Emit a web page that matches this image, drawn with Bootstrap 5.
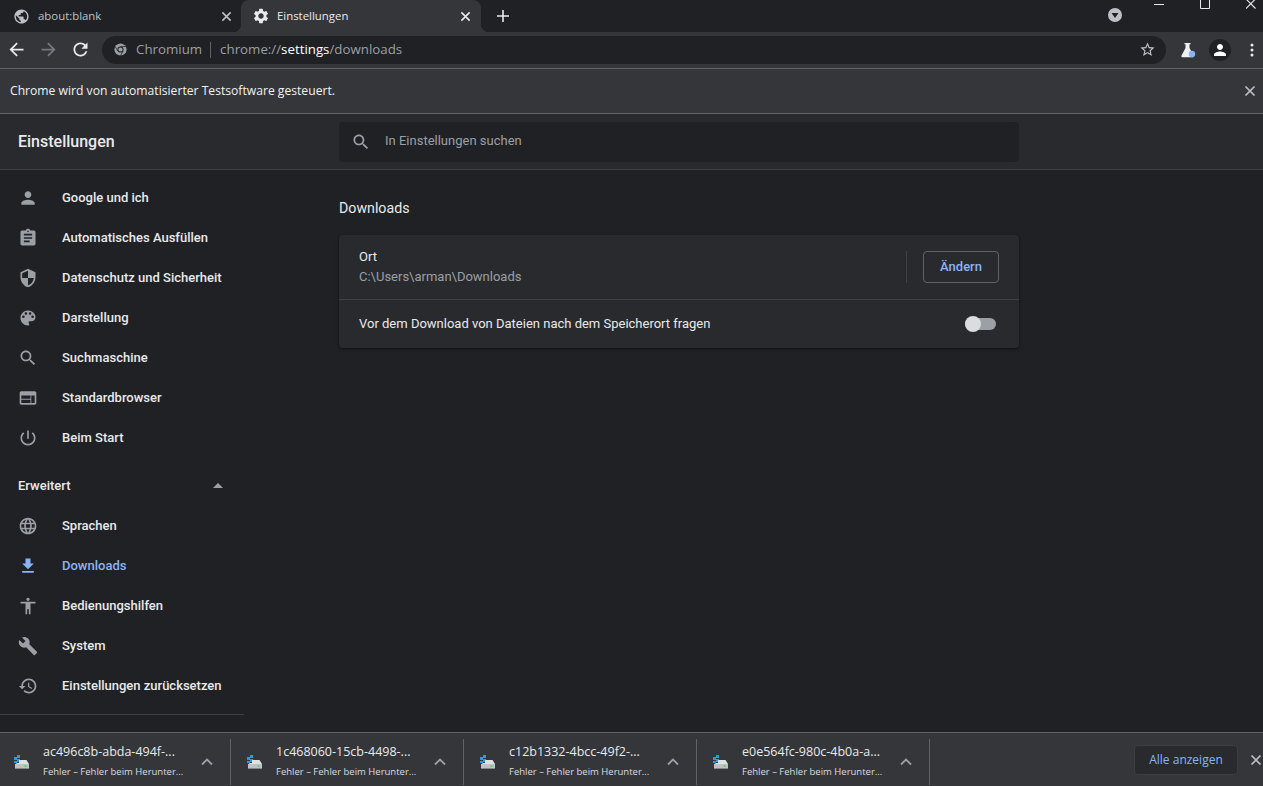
<!DOCTYPE html>
<html lang="de">
<head>
<meta charset="utf-8">
<title>Einstellungen</title>
<link rel="stylesheet" href="https://cdn.jsdelivr.net/npm/bootstrap@5.3.0/dist/css/bootstrap.min.css">
<style>
html,body{height:786px;overflow:hidden;background:#202124;}
body{font-family:Roboto,"Liberation Sans",sans-serif;color:#e8eaed;}
.ui{font-family:"Open Sans","Noto Sans",sans-serif;}
.frame{width:1263px;height:786px;}
.ic{fill:currentColor;flex:none;display:block;}
.tabstrip{height:32px;background:#202124;}
.tabx{height:32px;width:241px;font-size:11.4px;padding:0 9px 0 13px;color:#bdc1c6;position:relative;}
.tabx.on{background:#35363a;width:240px;border-radius:8px 8px 0 0;color:#e8eaed;padding:0 10px 0 11px;}
.tabx.on::before,.tabx.on::after{content:"";position:absolute;bottom:0;width:8px;height:8px;}
.tabx.on::before{left:-8px;background:radial-gradient(circle at 0 0,transparent 8px,#35363a 8.5px);}
.tabx.on::after{right:-8px;background:radial-gradient(circle at 100% 0,transparent 8px,#35363a 8.5px);}
.tabtitle{margin-left:8px;flex:1;white-space:nowrap;}
.on .tabtitle{margin-left:7px;}
.plusic{margin-left:15px;color:#e8eaed;}
.wincircle{margin:7px 31px 0 0;}
.winmin{margin-right:36px;}
.winmax{margin-right:36px;}
.winclose{margin-right:7px;}
.toolbar{height:37px;background:#35363a;border-bottom:1px solid #5f6368;}
.tbback{margin-left:6px;color:#e8eaed;}
.tbfwd{margin-left:11px;color:#75787d;}
.tbreload{margin-left:11px;color:#e8eaed;}
.omni{height:28px;width:1064px;margin-left:11px;background:#202124;border-radius:14px;font-size:13.3px;color:#9aa0a6;padding:0 10px 0 12px;}
.omnilogo{margin-right:9px;}
.omni .sep{width:1px;height:16px;background:#5f6368;margin:0 9px 0 8px;}
.omni b{font-weight:400;color:#fff;}
.staric{color:#bdc1c6;}
.flaskic{margin-left:14px;}
.avatar{width:22px;height:22px;background:#202124;margin-left:13px;color:#fff;}
.dots{margin-left:19px;}
.infobar{height:45px;background:#35363a;border-bottom:1px solid #5f6368;font-size:12.15px;color:#f1f3f4;padding:1px 7px 0 10px;}
.infox{color:#bdc1c6;}
.sethead{height:56px;background:#292a2d;border-bottom:1px solid #3f4043;padding-top:1px;}
.settitle{width:339px;padding-left:18px;font-size:16px;font-weight:500;color:#e8eaed;}
.searchbox{width:680px;height:40px;background:#202124;border-radius:4px;padding-left:12px;font-size:13px;color:#9aa0a6;}
.searchbox span{margin-left:14px;margin-bottom:2px;}
.mainarea{height:563px;}
.sidenav{width:244px;padding-top:8px;}
.navrow{height:40px;font-size:13px;font-weight:500;color:#e8eaed;padding-left:18px;}
.navrow svg{color:#9aa0a6;margin-right:24px;}
.navrow.active,.navrow.active svg{color:#8ab4f8;}
.advrow{height:48px;font-size:13px;font-weight:500;color:#e8eaed;padding:8px 21px 0 18px;}
.tri{width:0;height:0;border-left:5px solid transparent;border-right:5px solid transparent;border-bottom:5px solid #9aa0a6;}
.sidefoot{border-top:1px solid #3c4043;margin-top:8px;}
.content{padding-left:95px;}
.sectitle{font-size:14.2px;color:#e8eaed;height:65px;padding-top:29px;line-height:18px;font-weight:400;}
.setcard{width:680px;background:#292a2d;border-radius:4px;box-shadow:0 1px 2px rgba(0,0,0,.3),0 1px 3px 1px rgba(0,0,0,.15);font-size:13px;}
.cardrow{padding:0 20px;}
.r1{height:65px;border-bottom:1px solid #3f4043;}
.r2{height:48px;}
.subline{color:#9aa0a6;margin-top:2px;line-height:18px;}
.mainline{line-height:18px;color:#e8eaed;}
.vsep{width:1px;height:32px;background:#3f4043;margin-right:16px;}
.changebtn{width:76px;height:32px;border:1px solid #5f6368;border-radius:4px;color:#8ab4f8;font-size:13px;font-weight:500;padding:0;background:transparent;}
.togglex{width:31px;height:12px;position:relative;margin-right:3px;background:#9aa0a6;border-radius:6px;}
.togglex::before{content:"";position:absolute;left:0;top:-2px;width:16px;height:16px;border-radius:50%;background:#dadce0;}
.dlbar{height:54px;background:#35363a;border-top:1px solid #5f6368;}
.dlitem{width:233px;height:46px;border-right:1px solid #5f6368;padding-left:16px;margin-top:6px;}
.dlitem:first-child{width:231px;padding-left:14px;}
.dltext{width:139px;margin-left:13px;line-height:1.2;white-space:nowrap;padding-bottom:2px;}
.dlname{font-size:12.5px;color:#e8eaed;margin-bottom:7px;}
.dlstat{font-size:9.5px;color:#dadce0;}
.chev{margin-left:19px;color:#9aa0a6;}
.showall{width:104px;height:30px;background:#292a2d;border:1px solid #3c3d41;border-radius:4px;color:#8ab4f8;font-size:12px;font-weight:500;padding:0;}
.dlend{margin-left:auto;}
.dlclose{color:#bdc1c6;margin:0 1px 0 12px;}
</style>
</head>
<body>
<svg width="0" height="0" class="position-absolute">
<symbol id="i-person" viewBox="0 0 24 24"><path d="M12 12c2.21 0 4-1.79 4-4s-1.79-4-4-4-4 1.79-4 4 1.79 4 4 4zm0 2c-2.67 0-8 1.34-8 4v2h16v-2c0-2.66-5.33-4-8-4z"/></symbol>
<symbol id="i-assign" viewBox="0 0 24 24"><path d="M19 3h-4.18C14.4 1.84 13.3 1 12 1c-1.3 0-2.4.84-2.82 2H5c-1.1 0-2 .9-2 2v14c0 1.1.9 2 2 2h14c1.1 0 2-.9 2-2V5c0-1.1-.9-2-2-2zm-7 0c.55 0 1 .45 1 1s-.45 1-1 1-1-.45-1-1 .45-1 1-1zm2 14H7v-2h7v2zm3-4H7v-2h10v2zm0-4H7V7h10v2z"/></symbol>
<symbol id="i-shield" viewBox="0 0 24 24"><path d="M12 1L3 5v6c0 5.55 3.84 10.74 9 12 5.16-1.26 9-6.45 9-12V5l-9-4zm0 10.99h7c-.53 4.12-3.28 7.79-7 8.94V12H5V6.3l7-3.11v8.8z"/></symbol>
<symbol id="i-palette" viewBox="0 0 24 24"><path d="M12 3c-4.97 0-9 4.03-9 9s4.03 9 9 9c.83 0 1.5-.67 1.5-1.5 0-.39-.15-.74-.39-1.01-.23-.26-.38-.61-.38-.99 0-.83.67-1.5 1.5-1.5H16c2.76 0 5-2.24 5-5 0-4.42-4.03-8-9-8zm-5.5 9c-.83 0-1.5-.67-1.5-1.5S5.67 9 6.5 9 8 9.67 8 10.5 7.33 12 6.5 12zm3-4C8.67 8 8 7.33 8 6.5S8.67 5 9.5 5s1.5.67 1.5 1.5S10.33 8 9.5 8zm5 0c-.83 0-1.5-.67-1.5-1.5S13.67 5 14.5 5s1.5.67 1.5 1.5S15.33 8 14.5 8zm3 4c-.83 0-1.5-.67-1.5-1.5S16.67 9 17.5 9s1.5.67 1.5 1.5-.67 1.5-1.5 1.5z"/></symbol>
<symbol id="i-search" viewBox="0 0 24 24"><path d="M15.5 14h-.79l-.28-.27C15.41 12.59 16 11.11 16 9.5 16 5.91 13.09 3 9.5 3S3 5.91 3 9.5 5.91 16 9.5 16c1.61 0 3.09-.59 4.23-1.57l.27.28v.79l5 4.99L20.49 19l-4.99-5zm-6 0C7.01 14 5 11.99 5 9.5S7.01 5 9.5 5 14 7.01 14 9.5 11.99 14 9.5 14z"/></symbol>
<symbol id="i-web" viewBox="0 0 24 24"><path d="M20 4H4c-1.1 0-1.99.9-1.99 2L2 18c0 1.1.9 2 2 2h16c1.1 0 2-.9 2-2V6c0-1.1-.9-2-2-2zm-5 14H4v-4h11v4zm0-5H4V9h11v4zm5 5h-4V9h4v9z"/></symbol>
<symbol id="i-power" viewBox="0 0 24 24"><path d="M13 3h-2v10h2V3zm4.830 2.170l-1.420 1.420C17.990 7.860 19 9.810 19 12c0 3.870-3.130 7-7 7s-7-3.130-7-7c0-2.190 1.010-4.140 2.580-5.420L6.170 5.170C4.230 6.820 3 9.260 3 12c0 4.970 4.030 9 9 9s9-4.030 9-9c0-2.740-1.230-5.180-3.170-6.830z"/></symbol>
<symbol id="i-lang" viewBox="0 0 24 24"><path d="M11.990 2C6.470 2 2 6.480 2 12s4.470 10 9.990 10C17.520 22 22 17.520 22 12S17.520 2 11.990 2zm6.930 6h-2.950c-.32-1.250-.78-2.450-1.380-3.560 1.840.63 3.370 1.910 4.330 3.560zM12 4.040c.83 1.200 1.480 2.530 1.910 3.960h-3.820c.43-1.430 1.080-2.760 1.910-3.960zM4.260 14C4.100 13.360 4 12.690 4 12s.1-1.360.26-2h3.380c-.08.66-.14 1.320-.14 2 0 .68.06 1.340.14 2H4.260zm.82 2h2.950c.32 1.250.78 2.450 1.380 3.560-1.840-.63-3.370-1.900-4.330-3.560zm2.950-8H5.080c.96-1.660 2.490-2.930 4.330-3.560C8.810 5.550 8.350 6.750 8.030 8zM12 19.960c-.83-1.200-1.480-2.530-1.910-3.960h3.820c-.43 1.430-1.080 2.760-1.910 3.960zM14.340 14H9.660c-.09-.66-.16-1.320-.16-2 0-.68.07-1.350.16-2h4.680c.09.65.16 1.320.16 2 0 .68-.07 1.340-.16 2zm.25 5.560c.6-1.110 1.060-2.310 1.380-3.560h2.950c-.96 1.650-2.490 2.930-4.330 3.560zM16.360 14c.08-.66.14-1.320.14-2 0-.68-.06-1.340-.14-2h3.380c.16.64.26 1.310.26 2s-.1 1.360-.26 2h-3.380z"/></symbol>
<symbol id="i-dl" viewBox="0 0 24 24"><path d="M19 9h-4V3H9v6H5l7 7 7-7zM5 18v2h14v-2H5z"/></symbol>
<symbol id="i-access" viewBox="0 0 24 24"><path d="M12 2c1.100 0 2 .9 2 2s-.9 2-2 2-2-.9-2-2 .9-2 2-2zm9 7h-6v13h-2v-6h-2v6H9V9H3V7h18v2z"/></symbol>
<symbol id="i-build" viewBox="0 0 24 24"><path d="M22.700 19l-9.100-9.100c.9-2.300.4-5-1.500-6.900-2-2-5-2.400-7.400-1.300L9 6 6 9 1.600 4.700C.4 7.100.9 10.100 2.900 12.100c1.900 1.900 4.600 2.400 6.900 1.500l9.100 9.100c.4.400 1 .4 1.400 0l2.300-2.300c.5-.4.5-1.100.1-1.400z"/></symbol>
<symbol id="i-restore" viewBox="0 0 24 24"><path d="M13 3c-4.970 0-9 4.030-9 9H1l3.890 3.890.07.14L9 12H6c0-3.870 3.130-7 7-7s7 3.130 7 7-3.130 7-7 7c-1.930 0-3.680-.79-4.940-2.060l-1.420 1.420C8.270 19.990 10.510 21 13 21c4.970 0 9-4.030 9-9s-4.030-9-9-9zm-1 5v5l4.280 2.540.72-1.210-3.500-2.080V8H12z"/></symbol>
<symbol id="i-gear" viewBox="0 0 24 24"><path d="M19.140 12.940c.04-.3.06-.61.06-.94 0-.32-.02-.64-.07-.94l2.030-1.580a.49.49 0 0 0 .12-.61l-1.920-3.320a.488.488 0 0 0-.59-.22l-2.390.96c-.5-.38-1.030-.7-1.620-.94l-.36-2.540a.484.484 0 0 0-.48-.41h-3.840c-.24 0-.43.17-.47.41l-.36 2.540c-.59.24-1.130.57-1.620.94l-2.390-.96c-.22-.08-.47 0-.59.22L2.740 8.870c-.12.21-.08.47.12.61l2.030 1.580c-.05.3-.09.63-.09.94s.02.64.07.94l-2.030 1.580a.49.49 0 0 0-.12.61l1.920 3.320c.12.22.37.29.59.22l2.390-.96c.5.38 1.030.7 1.620.94l.36 2.540c.05.24.24.41.48.41h3.840c.24 0 .44-.17.47-.41l.36-2.540c.59-.24 1.130-.56 1.620-.94l2.390.96c.22.08.47 0 .59-.22l1.920-3.320c.12-.22.07-.47-.12-.61l-2.010-1.580zM12 15.600c-1.980 0-3.600-1.620-3.600-3.600s1.620-3.600 3.600-3.600 3.600 1.620 3.600 3.600-1.620 3.600-3.600 3.600z"/></symbol>
<symbol id="i-globe" viewBox="0 0 24 24"><path d="M12 2C6.480 2 2 6.480 2 12s4.480 10 10 10 10-4.480 10-10S17.520 2 12 2zm-1 17.930c-3.950-.49-7-3.850-7-7.930 0-.62.08-1.210.21-1.790L9 15v1c0 1.100.9 2 2 2v1.930zm6.900-2.540c-.26-.81-1-1.390-1.900-1.390h-1v-3c0-.55-.45-1-1-1H8v-2h2c.55 0 1-.45 1-1V7h2c1.100 0 2-.9 2-2v-.41c2.930 1.190 5 4.060 5 7.410 0 2.080-.8 3.970-2.100 5.390z"/></symbol>
<symbol id="i-x" viewBox="0 0 12 12"><path d="M1.500 1.500l9 9m0-9l-9 9" stroke="currentColor" stroke-width="1.700" fill="none"/></symbol>
<symbol id="i-chev" viewBox="0 0 12 8"><path d="M1 6.500l5-5 5 5" stroke="currentColor" stroke-width="1.800" fill="none"/></symbol>
<symbol id="i-drive" viewBox="0 0 16 16"><g fill="#19a1ec"><rect x="0" y="3" width="3" height="3"/><rect x="3" y="1" width="3" height="3"/><rect x="3" y="5" width="3" height="3"/><rect x="0" y="7" width="3" height="2"/></g><path d="M5 6h7.500L15 10H1.500l1.500-1h2z" fill="#dfe1e2"/><rect x="1" y="10" width="14" height="5" fill="#bfc3c5"/><rect x="1" y="14" width="14" height="1" fill="#85898b"/><rect x="10.500" y="11.500" width="2" height="1.300" fill="#38d24e"/></symbol>
</svg>

<div class="frame d-flex flex-column">
  <div class="tabstrip d-flex ui">
    <div class="tabx d-flex align-items-center">
      <svg class="ic" width="17" height="17"><use href="#i-globe"/></svg>
      <span class="tabtitle">about:blank</span>
      <svg class="ic" width="11" height="11"><use href="#i-x"/></svg>
    </div>
    <div class="tabx on d-flex align-items-center">
      <svg class="ic" width="18" height="18"><use href="#i-gear"/></svg>
      <span class="tabtitle">Einstellungen</span>
      <svg class="ic" width="11" height="11"><use href="#i-x"/></svg>
    </div>
    <svg class="ic align-self-center plusic" width="14" height="14" viewBox="0 0 14 14"><path d="M7 1v12M1 7h12" stroke="currentColor" stroke-width="1.600"/></svg>
    <div class="ms-auto d-flex align-items-start">
      <svg class="ic wincircle" width="16" height="16" viewBox="0 0 16 16"><circle cx="8" cy="8" r="7" fill="#bdc1c6"/><path d="M4.500 6h7L8 11z" fill="#202124"/></svg>
      <svg class="ic winmin" width="10" height="8" viewBox="0 0 10 8"><path d="M0 4.500h10" stroke="#e8eaed"/></svg>
      <svg class="ic winmax" width="10" height="9" viewBox="0 0 10 9"><path d="M.5 0v8.500h9V0" stroke="#e8eaed" fill="none"/></svg>
      <svg class="ic winclose" width="10" height="9" viewBox="0 0 10 9"><path d="M0 -1l9.500 9.500M9.500 -1L0 8.500" stroke="#e8eaed" stroke-width="1.100"/></svg>
    </div>
  </div>

  <div class="toolbar d-flex align-items-center ui">
    <svg class="ic tbback" viewBox="0 0 24 24" width="21" height="21"><path d="M20 11H7.830l5.590-5.590L12 4l-8 8 8 8 1.410-1.410L7.830 13H20v-2z"/></svg>
    <svg class="ic tbfwd" viewBox="0 0 24 24" width="21" height="21"><path d="M4 11h12.170l-5.590-5.590L12 4l8 8-8 8-1.410-1.410L16.170 13H4v-2z"/></svg>
    <svg class="ic tbreload" viewBox="0 0 24 24" width="21" height="21"><path d="M17.650 6.350C16.200 4.900 14.210 4 12 4c-4.420 0-7.990 3.580-7.990 8s3.570 8 7.990 8c3.730 0 6.840-2.550 7.730-6h-2.080c-.82 2.330-3.040 4-5.650 4-3.310 0-6-2.690-6-6s2.690-6 6-6c1.660 0 3.140.69 4.220 1.780L13 11h7V4l-2.350 2.350z"/></svg>
    <div class="omni d-flex align-items-center">
      <svg class="ic omnilogo" width="13" height="13" viewBox="0 0 16 16"><circle cx="8" cy="8" r="7.500" fill="#9aa0a6"/><circle cx="8" cy="8" r="3.800" fill="#202124"/><circle cx="8" cy="8" r="2.600" fill="#9aa0a6"/><path d="M8 4.300h7M4.800 10L1.500 4.500M11.200 10l-3.300 5.700" stroke="#202124" stroke-width=".9"/></svg>
      <span>Chromium</span><span class="sep"></span><span>chrome://<b>settings</b>/downloads</span>
      <svg class="ic ms-auto staric" viewBox="0 0 24 24" width="17" height="17"><path d="M22 9.240l-7.190-.62L12 2 9.190 8.630 2 9.240l5.460 4.730L5.820 21 12 17.270 18.180 21l-1.630-7.030L22 9.240zM12 15.400l-3.760 2.270 1-4.280-3.320-2.880 4.380-.38L12 6.100l1.710 4.040 4.380.38-3.320 2.880 1 4.280L12 15.400z"/></svg>
    </div>
    <svg class="ic flaskic" width="16" height="16" viewBox="0 0 16 16"><path d="M4.500 1h6v1.200h-1V6l4 7.500c.4 1-.1 1.800-1.100 1.800H2.600c-1 0-1.500-.8-1.100-1.800l4-7.500V2.200h-1z" fill="#eef0f2"/><circle cx="12" cy="12" r="3.200" fill="#8ab4f8"/></svg>
    <div class="avatar d-flex align-items-center justify-content-center rounded-circle"><svg class="ic" width="18" height="18"><use href="#i-person"/></svg></div>
    <svg class="ic dots" width="4" height="14" viewBox="0 0 4 14"><g fill="#e8eaed"><circle cx="2" cy="2" r="1.500"/><circle cx="2" cy="7" r="1.500"/><circle cx="2" cy="12" r="1.500"/></g></svg>
  </div>

  <div class="infobar d-flex align-items-center ui">
    <span>Chrome wird von automatisierter Testsoftware gesteuert.</span>
    <svg class="ic ms-auto infox" width="12" height="12"><use href="#i-x"/></svg>
  </div>

  <div class="sethead d-flex align-items-center">
    <div class="settitle">Einstellungen</div>
    <div class="searchbox d-flex align-items-center">
      <svg class="ic" width="20" height="20"><use href="#i-search"/></svg>
      <span>In Einstellungen suchen</span>
    </div>
  </div>

  <div class="mainarea d-flex flex-grow-1">
    <nav class="sidenav">
      <div class="navrow d-flex align-items-center"><svg class="ic" width="20" height="20"><use href="#i-person"/></svg>Google und ich</div>
      <div class="navrow d-flex align-items-center"><svg class="ic" width="20" height="20"><use href="#i-assign"/></svg>Automatisches Ausfüllen</div>
      <div class="navrow d-flex align-items-center"><svg class="ic" width="20" height="20"><use href="#i-shield"/></svg>Datenschutz und Sicherheit</div>
      <div class="navrow d-flex align-items-center"><svg class="ic" width="20" height="20"><use href="#i-palette"/></svg>Darstellung</div>
      <div class="navrow d-flex align-items-center"><svg class="ic" width="20" height="20"><use href="#i-search"/></svg>Suchmaschine</div>
      <div class="navrow d-flex align-items-center"><svg class="ic" width="20" height="20"><use href="#i-web"/></svg>Standardbrowser</div>
      <div class="navrow d-flex align-items-center"><svg class="ic" width="20" height="20"><use href="#i-power"/></svg>Beim Start</div>
      <div class="advrow d-flex align-items-center justify-content-between"><span>Erweitert</span><span class="tri"></span></div>
      <div class="navrow d-flex align-items-center"><svg class="ic" width="20" height="20"><use href="#i-lang"/></svg>Sprachen</div>
      <div class="navrow active d-flex align-items-center"><svg class="ic" width="20" height="20"><use href="#i-dl"/></svg>Downloads</div>
      <div class="navrow d-flex align-items-center"><svg class="ic" width="20" height="20"><use href="#i-access"/></svg>Bedienungshilfen</div>
      <div class="navrow d-flex align-items-center"><svg class="ic" width="20" height="20"><use href="#i-build"/></svg>System</div>
      <div class="navrow d-flex align-items-center"><svg class="ic" width="20" height="20"><use href="#i-restore"/></svg>Einstellungen zurücksetzen</div>
      <div class="sidefoot"></div>
    </nav>
    <main class="content">
      <div class="sectitle">Downloads</div>
      <div class="setcard">
        <div class="cardrow r1 d-flex align-items-center">
          <div class="flex-grow-1">
            <div class="mainline">Ort</div>
            <div class="subline">C:\Users\arman\Downloads</div>
          </div>
          <div class="vsep"></div>
          <button class="btn changebtn" type="button">Ändern</button>
        </div>
        <div class="cardrow r2 d-flex align-items-center justify-content-between">
          <span class="mainline">Vor dem Download von Dateien nach dem Speicherort fragen</span>
          <span class="togglex"></span>
        </div>
      </div>
    </main>
  </div>

  <div class="dlbar d-flex align-items-start ui">
    <div class="dlitem d-flex align-items-center">
      <svg class="ic" width="16" height="16"><use href="#i-drive"/></svg>
      <div class="dltext"><div class="dlname">ac496c8b-abda-494f-...</div><div class="dlstat">Fehler – Fehler beim Herunter...</div></div>
      <svg class="ic chev" width="12" height="8"><use href="#i-chev"/></svg>
    </div>
    <div class="dlitem d-flex align-items-center">
      <svg class="ic" width="16" height="16"><use href="#i-drive"/></svg>
      <div class="dltext"><div class="dlname">1c468060-15cb-4498-...</div><div class="dlstat">Fehler – Fehler beim Herunter...</div></div>
      <svg class="ic chev" width="12" height="8"><use href="#i-chev"/></svg>
    </div>
    <div class="dlitem d-flex align-items-center">
      <svg class="ic" width="16" height="16"><use href="#i-drive"/></svg>
      <div class="dltext"><div class="dlname">c12b1332-4bcc-49f2-...</div><div class="dlstat">Fehler – Fehler beim Herunter...</div></div>
      <svg class="ic chev" width="12" height="8"><use href="#i-chev"/></svg>
    </div>
    <div class="dlitem d-flex align-items-center">
      <svg class="ic" width="16" height="16"><use href="#i-drive"/></svg>
      <div class="dltext"><div class="dlname">e0e564fc-980c-4b0a-a...</div><div class="dlstat">Fehler – Fehler beim Herunter...</div></div>
      <svg class="ic chev" width="12" height="8"><use href="#i-chev"/></svg>
    </div>
    <div class="dlend d-flex align-items-center h-100">
      <button class="btn showall" type="button">Alle anzeigen</button>
      <svg class="ic dlclose" width="12" height="12"><use href="#i-x"/></svg>
    </div>
  </div>
</div>
<script src="https://cdn.jsdelivr.net/npm/bootstrap@5.3.0/dist/js/bootstrap.bundle.min.js"></script>
</body>
</html>
